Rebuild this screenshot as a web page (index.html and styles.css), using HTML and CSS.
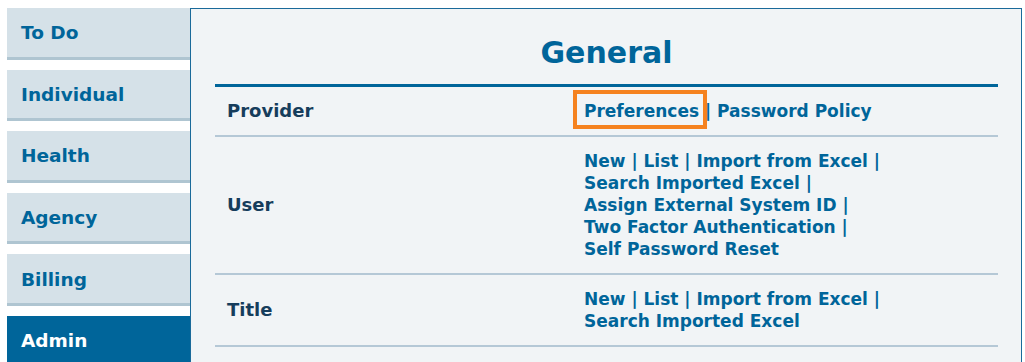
FILE: index.html
```html
<!DOCTYPE html>
<html lang="en">
<head>
    <meta charset="UTF-8">
    <title>Admin - General</title>
    <link rel="stylesheet" href="styles.css">
</head>
<body>

<div class="pagina">
    <ul class="pestanas">
        <li><a href="#">To Do</a></li>
        <li><a href="#">Individual</a></li>
        <li><a href="#">Health</a></li>
        <li><a href="#">Agency</a></li>
        <li><a href="#">Billing</a></li>
        <li class="activa"><a href="#">Admin</a></li>
    </ul>

    <div class="panel">
        <h1>General</h1>
        <table class="opciones">
            <tr>
                <td class="etiqueta">Provider</td>
                <td class="enlaces"><span class="resaltado"><a href="#">Preferences</a></span> | <a href="#">Password Policy</a></td>
            </tr>
            <tr>
                <td class="etiqueta">User</td>
                <td class="enlaces">
                    <a href="#">New</a> | <a href="#">List</a> | <a href="#">Import from Excel</a> |<br>
                    <a href="#">Search Imported Excel</a> |<br>
                    <a href="#">Assign External System ID</a> |<br>
                    <a href="#">Two Factor Authentication</a> |<br>
                    <a href="#">Self Password Reset</a>
                </td>
            </tr>
            <tr>
                <td class="etiqueta">Title</td>
                <td class="enlaces">
                    <a href="#">New</a> | <a href="#">List</a> | <a href="#">Import from Excel</a> |<br>
                    <a href="#">Search Imported Excel</a>
                </td>
            </tr>
        </table>
    </div>
</div>

</body>
</html>
```

FILE: styles.css
```css
body {
    margin: 0;
    padding: 8px 3px 0 7px;
    font-family: "DejaVu Sans", Verdana, sans-serif;
    font-weight: bold;
    font-size: 17px;
    background: white;
    overflow: hidden;
}
a {
    color: #00659a;
    text-decoration: none;
}
.pagina {
    display: flex;
    align-items: stretch;
    height: 354px;
}
.pestanas {
    list-style: none;
    margin: 0;
    padding: 0;
    width: 183px;
    flex-shrink: 0;
}
.pestanas li {
    height: 51.6px;
    box-sizing: border-box;
    padding: 1px 0 0 14px;
    margin-bottom: 10px;
    background: #d5e1e8;
    border-bottom: 3px solid #afc5d1;
    display: flex;
    align-items: center;
    font-size: 18.5px;
}
.pestanas li.activa {
    background: #00659a;
    border-bottom-color: #00659a;
}
.pestanas li.activa a {
    color: white;
}
.panel {
    flex: 1;
    background: #f1f4f6;
    border: 1px solid #1a6a9a;
    border-bottom: none;
    padding: 0 23px 0 24px;
}
h1 {
    margin: 0;
    height: 78px;
    box-sizing: border-box;
    line-height: 88px;
    text-align: center;
    color: #00659a;
    font-size: 30px;
    border-bottom: 3px solid #00659a;
}
.opciones {
    width: 100%;
    border-collapse: collapse;
}
.opciones td {
    padding: 13px 12px;
    line-height: 22px;
    vertical-align: middle;
    border-bottom: 2px solid #b5c8d6;
    text-align: left;
}
.etiqueta {
    width: 333px;
    color: #163d5c;
    font-size: 18px;
}
.enlaces {
    color: #00659a;
}
.resaltado {
    position: relative;
}
.resaltado::after {
    content: "";
    position: absolute;
    left: -11px;
    right: -8px;
    top: -11px;
    bottom: -8px;
    border: 4px solid #f5821f;
}
```
